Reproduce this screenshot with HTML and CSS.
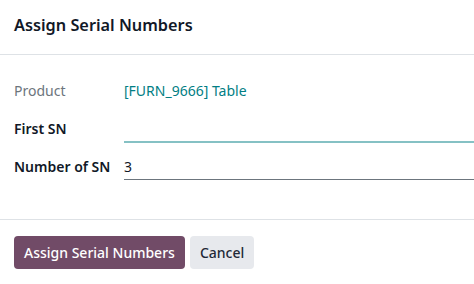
FILE: index.html
```html
<!DOCTYPE html>
<html lang="en">
<head>
    <meta charset="UTF-8">
    <meta name="viewport" content="width=device-width, initial-scale=1.0">
    <title>Assign Serial Numbers</title>
    <link rel="stylesheet" href="styles.css">
</head>
<body>
    <div class="modal">
        <!-- Header -->
        <div class="modal-header">
            <h4 class="modal-title">Assign Serial Numbers</h4>
        </div>

        <!-- Form -->
        <div class="modal-body">
            <div class="field-row">
                <label class="field-label muted">Product</label>
                <div class="field-value"><a href="#" class="link">[FURN_9666] Table</a></div>
            </div>
            <div class="field-row">
                <label class="field-label" for="first-sn">First SN</label>
                <div class="field-value"><input type="text" id="first-sn" class="input focused"></div>
            </div>
            <div class="field-row">
                <label class="field-label" for="num-sn">Number of SN</label>
                <div class="field-value"><input type="text" id="num-sn" class="input" value="3"></div>
            </div>
        </div>

        <!-- Footer -->
        <div class="modal-footer">
            <button class="btn btn-primary">Assign Serial Numbers</button>
            <button class="btn btn-secondary">Cancel</button>
        </div>
    </div>
</body>
</html>
```

FILE: styles.css
```css
body {
    margin: 0;
    font-family: 'Noto Sans', sans-serif;
    background-color: #fff;
    color: #212529;
    overflow: hidden;
}

.modal {
    width: 100%;
}

.modal-header {
    height: 54px;
    padding: 0 14px;
    display: flex;
    align-items: center;
    border-bottom: 1px solid #dee2e6;
}

.modal-title {
    margin: 0;
    margin-top: -5px;
    font-size: 16.3px;
    font-weight: 600;
    color: #111827;
}

.modal-body {
    padding: 16px 0 34px 14px;
    border-bottom: 1px solid #dee2e6;
}

.field-row {
    display: flex;
    align-items: center;
    height: 38px;
}

.field-label {
    width: 110px;
    font-size: 14px;
    font-weight: 600;
    color: #111827;
}

.field-label.muted {
    font-weight: 400;
    color: #6c757d;
}

.field-value {
    flex: 1;
}

.link {
    font-size: 14px;
    color: #017e84;
    text-decoration: none;
}

.input {
    width: 100%;
    box-sizing: border-box;
    border: none;
    border-bottom: 1px solid #6c757d;
    padding: 5px 0 3px;
    font-family: inherit;
    font-size: 14px;
    color: #111827;
    outline: none;
    background: transparent;
}

.input.focused {
    border-bottom: 2px solid #85c1c4;
}

.modal-footer {
    padding: 16px 14px;
    display: flex;
    gap: 5px;
}

.btn {
    font-family: inherit;
    font-size: 14px;
    font-weight: 500;
    height: 33px;
    padding: 0 10px;
    border: none;
    border-radius: 4px;
    cursor: pointer;
}

.btn-primary {
    color: #fff;
    background-color: #714b67;
}

.btn-secondary {
    color: #1f2937;
    background-color: #e7e9ed;
}
```
